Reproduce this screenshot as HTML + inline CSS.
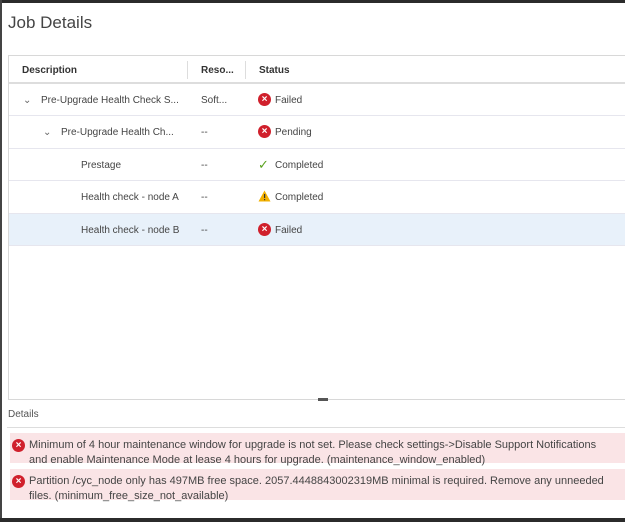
<!DOCTYPE html>
<html><head><style>
*{margin:0;padding:0;box-sizing:border-box}
body{width:625px;height:522px;background:#fff;font-family:"Liberation Sans",sans-serif;position:relative;overflow:hidden;color:#333}
.top{position:absolute;left:0;top:0;width:625px;height:3px;background:#2b2b2b}
.left{position:absolute;left:0;top:0;width:2px;height:522px;background:#444}
.bot{position:absolute;left:0;top:518px;width:625px;height:4px;background:#2b2b2b}
h1{position:absolute;left:8px;top:13px;font-size:17px;font-weight:normal;color:#444}
.grid{position:absolute;left:8px;top:55px;width:620px;height:345px;border:1px solid #d8d8d8}
.hdr{height:28px;border-bottom:2px solid #ddd;position:relative;font-size:10px;font-weight:bold;color:#333}
.hdr span{position:absolute;top:9px}
.sep{position:absolute;top:5px;width:1px;height:18px;background:#ddd}
.row{height:32.4px;border-bottom:1px solid #e6e6ee;position:relative;font-size:10px;color:#444}
.row span{position:absolute;top:11px}
.sel{background:#e8f1fa}
.ic{position:absolute;top:9px;left:249px;width:13px;height:13px;border-radius:50%;background:#d0202c;color:#fff;font-size:10px;line-height:13px;text-align:center;font-weight:bold}
.st{left:266px}
.chev{color:#666}
.det{position:absolute;left:8px;top:409px;font-size:10px;color:#555}
.dbox{position:absolute;left:7px;top:427px;width:620px;height:90px;border-top:1px solid #ddd}
.err{position:absolute;left:3px;width:616px;background:#fae4e6;font-size:11px;color:#444;line-height:15px;padding:5px 0 0 19px}
.err i{position:absolute;left:2px;top:6px;width:13px;height:13px;border-radius:50%;background:#d0202c;color:#fff;font-size:10px;line-height:13px;text-align:center;font-style:normal;font-weight:bold}
</style></head><body>
<div class="top"></div><div class="left"></div>
<h1>Job Details</h1>
<div class="grid">
<div class="hdr"><span style="left:13px">Description</span><div class="sep" style="left:178px"></div><span style="left:192px">Reso...</span><div class="sep" style="left:236px"></div><span style="left:250px">Status</span></div>
<div class="row"><span class="chev" style="left:14px">&#8964;</span><span style="left:32px">Pre-Upgrade Health Check S...</span><span style="left:192px">Soft...</span><div class="ic">×</div><span class="st">Failed</span></div>
<div class="row"><span class="chev" style="left:34px">&#8964;</span><span style="left:52px">Pre-Upgrade Health Ch...</span><span style="left:192px">--</span><div class="ic">×</div><span class="st">Pending</span></div>
<div class="row"><span style="left:72px">Prestage</span><span style="left:192px">--</span><span style="left:249px;top:8px;color:#5aa220;font-size:13px">&#10003;</span><span class="st">Completed</span></div>
<div class="row"><span style="left:72px">Health check - node A</span><span style="left:192px">--</span><svg style="position:absolute;left:249px;top:9px" width="13" height="12" viewBox="0 0 13 12"><path d="M6.5 0.5L12.5 11.5H0.5Z" fill="#f2b000"/><rect x="6" y="4" width="1.2" height="4" fill="#333"/><rect x="6" y="9" width="1.2" height="1.2" fill="#333"/></svg><span class="st">Completed</span></div>
<div class="row sel"><span style="left:72px">Health check - node B</span><span style="left:192px">--</span><div class="ic">×</div><span class="st">Failed</span></div>
</div>
<div style="position:absolute;left:318px;top:398px;width:10px;height:3px;background:#555"></div>
<div class="det">Details</div>
<div class="dbox">
<div class="err" style="top:5px;height:30px"><i>×</i>Minimum of 4 hour maintenance window for upgrade is not set. Please check settings-&gt;Disable Support Notifications<br>and enable Maintenance Mode at lease 4 hours for upgrade. (maintenance_window_enabled)</div>
<div class="err" style="top:41px;height:31px"><i>×</i>Partition /cyc_node only has 497MB free space. 2057.4448843002319MB minimal is required. Remove any unneeded<br>files. (minimum_free_size_not_available)</div>
</div>
<div class="bot"></div>
</body></html>
